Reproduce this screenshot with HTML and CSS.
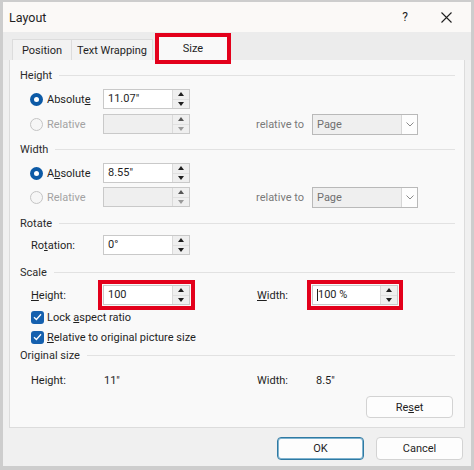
FILE: index.html
```html
<!DOCTYPE html>
<html>
<head>
<meta charset="utf-8">
<link rel="stylesheet" href="styles.css">
</head>
<body>
<div class="window">
  <header class="titlebar">
    <span class="title">Layout</span>
    <span class="help">?</span>
    <span class="close"><svg width="11" height="11" viewBox="0 0 11 11"><path d="M0.5 0.5L10.5 10.5M10.5 0.5L0.5 10.5" stroke="#1f1f1f" stroke-width="1.1" fill="none"/></svg></span>
  </header>
  <nav class="tabs">
    <div class="tab tab-pos">Position</div>
    <div class="tab tab-wrap">Text Wrapping</div>
    <div class="tab tab-size">Size</div>
  </nav>
  <main class="panel">
    <section class="group">
      <div class="group-head">Height</div>
      <div class="row first">
        <label class="opt"><span class="radio on"></span><span>Absolut<u>e</u></span></label>
        <div class="spin"><span class="val">11.07"</span><span class="arrows"><i class="up"></i><i class="down"></i></span></div>
      </div>
      <div class="row">
        <label class="opt disabled"><span class="radio"></span><span>Relative</span></label>
        <div class="spin disabled"><span class="val"></span><span class="arrows"><i class="up"></i><i class="down"></i></span></div>
        <span></span>
        <span class="rel-label">relative to</span>
        <div class="select"><span class="val">Page</span><span class="drop"><svg width="8" height="5" viewBox="0 0 8 5"><path d="M0.5 0.5L4 4L7.5 0.5" stroke="#8a8a8a" stroke-width="1" fill="none"/></svg></span></div>
      </div>
    </section>

    <section class="group g-width">
      <div class="group-head">Width</div>
      <div class="row first">
        <label class="opt"><span class="radio on"></span><span>A<u>b</u>solute</span></label>
        <div class="spin"><span class="val">8.55"</span><span class="arrows"><i class="up"></i><i class="down"></i></span></div>
      </div>
      <div class="row flush">
        <label class="opt disabled"><span class="radio"></span><span>Relative</span></label>
        <div class="spin disabled"><span class="val"></span><span class="arrows"><i class="up"></i><i class="down"></i></span></div>
        <span></span>
        <span class="rel-label">relative to</span>
        <div class="select"><span class="val">Page</span><span class="drop"><svg width="8" height="5" viewBox="0 0 8 5"><path d="M0.5 0.5L4 4L7.5 0.5" stroke="#8a8a8a" stroke-width="1" fill="none"/></svg></span></div>
      </div>
    </section>

    <section class="group g-rotate">
      <div class="group-head">Rotate</div>
      <div class="row r-rotate">
        <label class="lbl">Ro<u>t</u>ation:</label>
        <div class="spin"><span class="val">0°</span><span class="arrows"><i class="up"></i><i class="down"></i></span></div>
      </div>
    </section>

    <section class="group g-scale">
      <div class="group-head">Scale</div>
      <div class="row r-scale">
        <label class="lbl"><u>H</u>eight:</label>
        <div class="spin marked"><span class="val">100</span><span class="arrows"><i class="up"></i><i class="down"></i></span></div>
        <span></span>
        <label class="lbl"><u>W</u>idth:</label>
        <div class="spin marked narrow"><span class="val"><span class="caret"></span>100 %</span><span class="arrows"><i class="up"></i><i class="down"></i></span></div>
      </div>
      <label class="check"><span class="box"><svg width="9" height="8" viewBox="0 0 9 8"><path d="M1 4.2L3.4 6.5L8 1.2" stroke="#fff" stroke-width="1.3" fill="none"/></svg></span><span>Lock <u>a</u>spect ratio</span></label>
      <label class="check"><span class="box"><svg width="9" height="8" viewBox="0 0 9 8"><path d="M1 4.2L3.4 6.5L8 1.2" stroke="#fff" stroke-width="1.3" fill="none"/></svg></span><span><u>R</u>elative to original picture size</span></label>
    </section>

    <section class="group g-orig">
      <div class="group-head">Original size</div>
      <div class="row r-orig">
        <span class="lbl">Height:</span>
        <span class="plain">11"</span>
        <span></span>
        <span class="lbl">Width:</span>
        <span class="plain indent">8.5"</span>
      </div>
    </section>

    <div class="reset-row">
      <button class="btn">Re<u>s</u>et</button>
    </div>
  </main>
  <footer class="footer">
    <button class="btn ok">OK</button>
    <button class="btn">Cancel</button>
  </footer>
</div>
</body>
</html>
```

FILE: styles.css
```css
* { box-sizing: border-box; }

html, body {
  margin: 0;
  padding: 0;
}

body {
  width: 474px;
  height: 470px;
  background: #cdcdcd;
  padding: 2px 3px 0 3px;
  font-family: Roboto, "Noto Sans", sans-serif;
  font-size: 11px;
  color: #1f1f1f;
  overflow: hidden;
}

.window {
  width: 468px;
  height: 464px;
  background: #f0f0f0;
  display: flex;
  flex-direction: column;
}

/* title bar */
.titlebar {
  height: 30px;
  background: #fbf9f7;
  display: flex;
  align-items: center;
  padding-left: 6px;
}
.title {
  font-size: 12.5px;
  flex: 1;
}
.help {
  width: 20px;
  text-align: center;
  font-size: 12px;
  margin-right: 21px;
}
.close {
  width: 20px;
  display: flex;
  justify-content: center;
  margin-right: 15px;
}

/* tabs */
.tabs {
  height: 28px;
  display: flex;
  align-items: flex-end;
  padding-left: 9px;
  background: #ececec;
}
.tab {
  height: 21px;
  display: flex;
  align-items: center;
  justify-content: center;
  background: #f2f2f2;
  border: 1px solid #dcdcdc;
  border-bottom: none;
}
.tab-pos { width: 60px; }
.tab-wrap { width: 81px; border-left: none; }
.tab-size {
  width: 68px;
  height: 23px;
  margin-left: 6px;
  background: #f9f9f9;
  border: none;
  outline: 4px solid #e3001b;
  position: relative;
  z-index: 2;
}

/* panel */
.panel {
  margin: 0 6px;
  height: 368px;
  background: #f9f9f9;
  border: 1px solid #dcdcdc;
  border-top: none;
  padding: 7px 9px 0 10px;
}

.group-head {
  height: 16px;
  display: flex;
  align-items: center;
  color: #2b2b2b;
}
.group-head::after {
  content: "";
  flex: 1;
  margin-left: 7px;
  border-top: 1px solid #e2e2e2;
}

.g-width { margin-top: 5px; }
.g-rotate { margin-top: 6px; }
.g-scale { margin-top: 7px; }

.row {
  height: 24px;
  margin-top: 1px;
  margin-left: 10px;
  display: grid;
  grid-template-columns: 73px 87px 66px 56px 106px;
  align-items: center;
}
.row.first { margin-top: 4px; }
.row.flush { margin-top: 0; }
.r-rotate { margin-top: 2px; }
.r-scale { margin-top: 3px; }
.r-orig { margin-top: 5px; }

.opt {
  display: flex;
  align-items: center;
}
.opt.disabled { color: #a3a3a3; }
.lbl { padding-left: 1px; }
.plain { padding-left: 1px; }
.plain.indent { padding-left: 4px; }

.radio {
  width: 13px;
  height: 13px;
  border-radius: 50%;
  border: 1px solid #c4c4c4;
  background: #f6f6f6;
  margin-right: 4px;
  display: flex;
  align-items: center;
  justify-content: center;
}
.radio.on {
  border: none;
  background: #0c5aa6;
}
.radio.on::after {
  content: "";
  width: 5px;
  height: 5px;
  border-radius: 50%;
  background: #fff;
}

u { text-decoration: underline; text-underline-offset: 1px; }

/* spin input */
.spin {
  height: 20px;
  width: 87px;
  border: 1px solid #c9c9c9;
  background: #fff;
  display: flex;
}
.spin.disabled { background: #efefef; }
.spin.narrow { width: 86px; }
.spin.marked {
  outline: 4px solid #e3001b;
  outline-offset: 1px;
}
.spin .val {
  flex: 1;
  padding-left: 4px;
  line-height: 18px;
  display: flex;
  align-items: center;
}
.caret {
  width: 1px;
  height: 12px;
  background: #1f1f1f;
}
.arrows {
  width: 17px;
  border-left: 1px solid #dadada;
  display: flex;
  flex-direction: column;
  background: #efefef;
}
.arrows i {
  flex: 1;
  display: flex;
  align-items: center;
  justify-content: center;
}
.arrows i.up { border-bottom: 1px solid #e0e0e0; }
.arrows i.up::before {
  content: "";
  border-left: 3.5px solid transparent;
  border-right: 3.5px solid transparent;
  border-bottom: 4px solid #1f1f1f;
}
.arrows i.down::before {
  content: "";
  border-left: 3.5px solid transparent;
  border-right: 3.5px solid transparent;
  border-top: 4px solid #1f1f1f;
}
.spin.disabled .arrows i.up::before { border-bottom-color: #555; }
.spin.disabled .arrows i.down::before { border-top-color: #9a9a9a; }

.rel-label { color: #7a7a7a; }

.select {
  height: 21px;
  width: 106px;
  border: 1px solid #b9b9b9;
  background: #efefef;
  display: flex;
}
.select .val {
  flex: 1;
  padding-left: 4px;
  color: #6f6f6f;
  display: flex;
  align-items: center;
}
.select .drop {
  width: 16px;
  background: #fdfdfd;
  border-left: 1px solid #d6d6d6;
  display: flex;
  align-items: center;
  justify-content: center;
}

/* checkboxes */
.check {
  height: 20px;
  margin-left: 11px;
  display: flex;
  align-items: center;
}
.box {
  width: 13px;
  height: 13px;
  border-radius: 3px;
  background: #1560ae;
  margin-right: 3px;
  display: flex;
  align-items: center;
  justify-content: center;
}

/* buttons */
.btn {
  width: 87px;
  height: 22px;
  font: inherit;
  color: #1f1f1f;
  background: #fdfdfd;
  border: 1px solid #d3d3d3;
  border-radius: 4px;
  padding: 0;
}
.reset-row {
  margin-top: 4px;
  display: flex;
  justify-content: flex-end;
  padding-right: 2px;
}

.footer {
  flex: 1;
  display: flex;
  justify-content: flex-end;
  gap: 12px;
  padding: 9px 8px 0 0;
}
.footer .btn { height: 23px; }
.btn.ok {
  border: 1px solid #2f7aa3;
  box-shadow: inset 0 0 0 1px #7fb3cf;
}
```
